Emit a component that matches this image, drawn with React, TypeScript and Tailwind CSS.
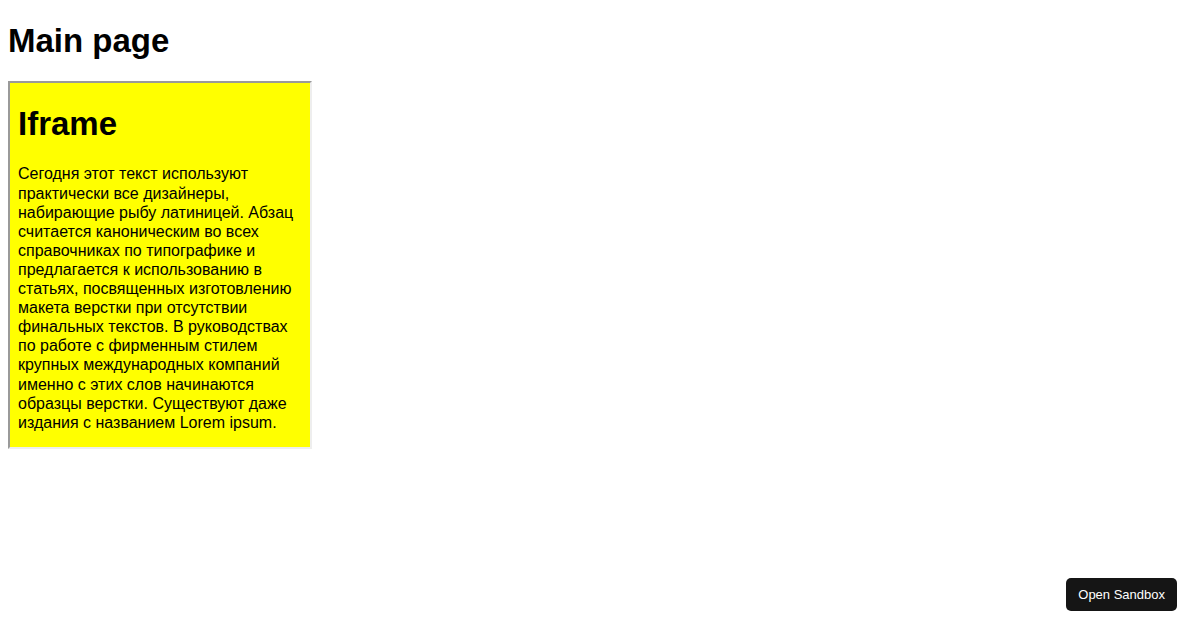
export default function App() {
  return (
    <div className="min-h-[630px] bg-white px-2 pt-[23px] font-['Liberation_Sans',Arial,sans-serif] text-black">
      <h1 className="mt-0 mb-[21.44px] text-[33px] font-bold leading-[36.8px]">Main page</h1>

      {/* Framed document */}
      <div className="w-[304px] border-2 border-t-[#9a9a9a] border-l-[#9a9a9a] border-b-[#eeeeee] border-r-[#eeeeee] bg-[#ffff00] px-2">
        <h1 className="mt-[23px] mb-[21.44px] text-[33px] font-bold leading-[36.8px]">Iframe</h1>
        <p className="mb-[15px] text-base leading-[19.1px]">
          Сегодня этот текст используют практически все дизайнеры, набирающие рыбу латиницей.
          Абзац считается каноническим во всех справочниках по типографике и предлагается к
          использованию в статьях, посвященных изготовлению макета верстки при отсутствии
          финальных текстов. В руководствах по работе с фирменным стилем крупных международных
          компаний именно с этих слов начинаются образцы верстки. Существуют даже издания с
          названием Lorem ipsum.
        </p>
      </div>

      <button className="absolute right-[23px] bottom-[19px] rounded-[5px] bg-[#151515] px-3 py-[8px] text-[13px] leading-[17px] text-white">
        Open Sandbox
      </button>
    </div>
  );
}
